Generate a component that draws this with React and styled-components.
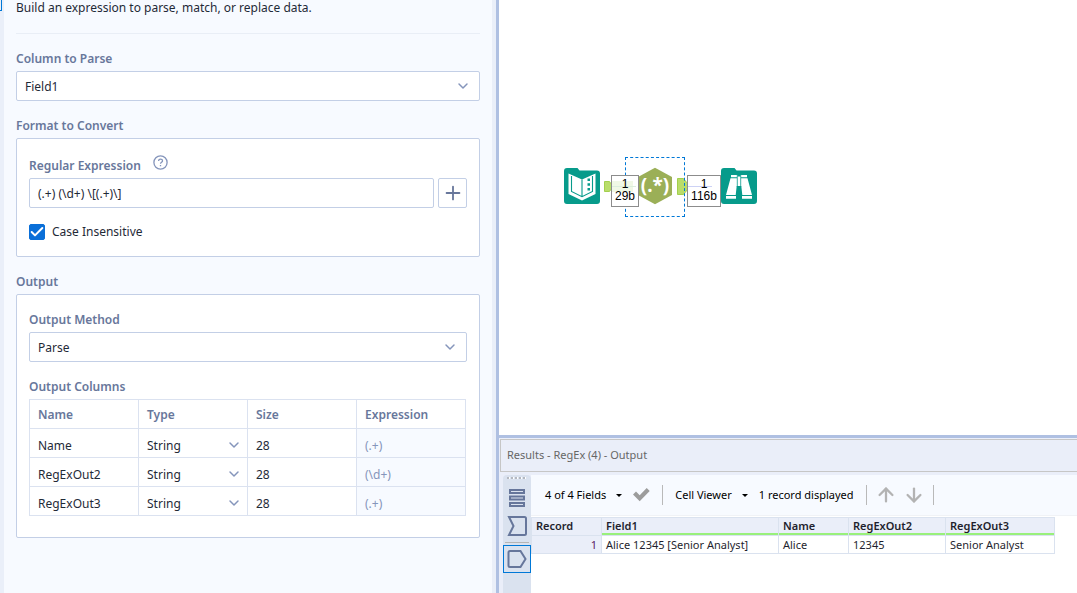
import React, { useState } from "react";
import styled, { createGlobalStyle } from "styled-components";
import { ArrowDown, ArrowUp, Check, ChevronDown, Plus } from "lucide-react";

const GlobalStyle = createGlobalStyle`
  * {
    box-sizing: border-box;
  }

  body {
    margin: 0;
    font-family: "Noto Sans", "Open Sans", sans-serif;
    font-size: 12px;
    color: #1f2a37;
  }

  button, input, select {
    font: inherit;
    color: inherit;
  }
`;

const Page = styled.div`
  display: grid;
  grid-template-columns: minmax(0, 248fr) 3px minmax(0, 289fr);
  min-height: 100vh;
  background: #fff;
`;

const Splitter = styled.div`
  background: #afc0e2;
  min-height: 3px;
`;

//configuration
const Gutter = styled.div`
  position: relative;
  display: flex;
  padding: 0 4px;
  background: #eaeff9;
`;

const FocusEdge = styled.div`
  position: absolute;
  left: 0;
  top: 0;
  width: 2px;
  height: 11px;
  border: solid #0078d7;
  border-width: 0 1px 1px 0;
`;

const Config = styled.section`
  flex: 1;
  min-width: 0;
  padding: 0 12px;
  background: #f7faff;
`;

const Intro = styled.p`
  margin: 0 0 16px;
  padding-bottom: 17px;
  line-height: 16px;
  border-bottom: 1px solid #e9eef6;
`;

const Field = styled.div`
  display: flex;
  flex-direction: column;
  gap: 3px;
  margin-bottom: 16px;
`;

const Label = styled.label`
  font-weight: 600;
  line-height: 18px;
  color: #68779b;
`;

const Panel = styled.div`
  padding: 16px 12px;
  border: 1px solid #c3cfe6;
  border-radius: 2px;
  background: #fff;
`;

const LabelRow = styled.div`
  display: flex;
  align-items: flex-end;
  gap: 12px;
  height: 20px;
`;

const HelpButton = styled.button`
  align-self: flex-start;
  display: flex;
  padding: 0;
  border: 0;
  background: none;
`;

const SelectBox = styled.div`
  position: relative;
  color: #8595bb;

  svg {
    position: absolute;
    right: ${({ $bare }) => ($bare ? 5 : 9)}px;
    top: 50%;
    margin-top: ${({ $bare }) => ($bare ? -6 : -8)}px;
    pointer-events: none;
  }
`;

const Select = styled.select`
  display: block;
  width: 100%;
  height: ${({ $bare }) => ($bare ? 28 : 30)}px;
  padding: ${({ $bare }) => ($bare ? 4 : 0)}px 24px 0 8px;
  border: ${({ $bare }) => ($bare ? "0" : "1px solid #c3cfe6")};
  border-radius: 2px;
  background: #fff;
  color: #1f2a37;
  appearance: none;
`;

const InputRow = styled.div`
  display: flex;
  gap: 4px;
`;

const TextInput = styled.input`
  flex: 1;
  min-width: 0;
  height: 30px;
  padding: 0 8px;
  border: 1px solid #c3cfe6;
  border-radius: 2px;
  background: #fff;
`;

const AddButton = styled.button`
  display: flex;
  align-items: center;
  justify-content: center;
  width: 29px;
  padding: 0;
  border: 1px solid #c3cfe6;
  border-radius: 2px;
  background: #fff;
  color: #68779b;
`;

const CheckRow = styled.label`
  display: flex;
  align-items: center;
  gap: 7px;
  line-height: 16px;
`;

const CheckBox = styled.span`
  position: relative;
  display: flex;

  input {
    width: 16px;
    height: 16px;
    margin: 0;
    border: 1px solid #0a6fd8;
    border-radius: 2px;
    background: #fff;
    appearance: none;
  }

  input:checked {
    background: #0a6fd8;
  }

  svg {
    position: absolute;
    inset: 0;
    color: #fff;
    pointer-events: none;
  }
`;

const ColumnsTable = styled.table`
  width: calc(100% - 1px);
  margin: 3px 0 5px;
  table-layout: fixed;
  border-collapse: collapse;

  th, td {
    height: 29px;
    padding: 0;
    border: 1px solid #dbe2f0;
    text-align: left;
  }

  th {
    padding: 0 8px;
    color: #68779b;
    font-weight: 600;
  }
`;

const CellInput = styled.input`
  display: block;
  width: 100%;
  height: 28px;
  padding: 4px 8px 0;
  border: 0;
  background: transparent;
`;

const Expression = styled.td`
  && {
    padding: 4px 8px 0;
  }
  background: #f7faff;
  color: #8595bb;
`;

//workflow
const Main = styled.div`
  display: flex;
  flex-direction: column;
  min-width: 0;
`;

const Canvas = styled.section`
  position: relative;
  flex: 1;
  background: #fff;
`;

const Item = styled.svg`
  position: absolute;
  left: ${({ $x }) => $x}px;
  top: ${({ $y }) => $y}px;
`;

const Selection = styled.div`
  position: absolute;
  left: 126px;
  top: 157px;
  width: 60px;
  height: 60px;
  border: 1px dashed #0078d7;
`;

const Count = styled.div`
  position: absolute;
  left: ${({ $x }) => $x}px;
  top: 175px;
  width: ${({ $w }) => $w}px;
  height: 32px;
  padding-top: 2px;
  border: 1px solid #8c8c8c;
  background: ${({ $line, $tint }) => `
    linear-gradient(${$line}, ${$line}) 0 10px / 24px 1px no-repeat,
    linear-gradient(${$tint}, ${$tint}) 0 5px / 21px 11px no-repeat,
    #fff`};
  font-family: "Liberation Sans", sans-serif;
  line-height: 12px;
  text-align: center;
  color: #000;
`;

//results
const Results = styled.section`
  display: flex;
  flex-direction: column;
  min-height: 155px;
  padding: 1px 0 0 1px;
  background: #eaeef9;
`;

const ResultsTitle = styled.div`
  height: 33px;
  padding-left: 6px;
  border: 1px solid #c6c6c6;
  border-right: 0;
  font-size: 11px;
  line-height: 30px;
  color: #666;
`;

const ResultsBody = styled.div`
  display: flex;
  flex: 1;
  padding: 3px 0 0 3px;
`;

const Sidebar = styled.div`
  display: flex;
  flex-direction: column;
  width: 28px;
  border-radius: 4px 4px 0 0;
  background: #dae2ef;
`;

const Grip = styled.div`
  height: 2px;
  margin: 2px 5px 5px 4px;
  background: repeating-linear-gradient(90deg, #b4b8c0 0 2px, #fff 2px 3px, transparent 3px 4px);
`;

const SideButton = styled.button`
  display: flex;
  align-items: center;
  justify-content: center;
  height: 28px;
  padding: 0;
  border: ${({ $active }) => ($active ? "1px solid #0078d7" : "0")};
  background: none;
`;

const SideRule = styled.hr`
  width: 24px;
  margin: 2px auto;
  border: 0;
  border-top: 1px solid #b5b5b5;
`;

const ResultsView = styled.div`
  flex: 1;
  min-width: 0;
  background: #fff;
`;

const Toolbar = styled.div`
  display: flex;
  align-items: center;
  height: 41px;
  padding-left: 14px;
  border-bottom: 1px solid #f0f2f6;
  background: #f7faff;
  font-size: 11px;
  line-height: 16px;
  color: #000;
`;

const MenuButton = styled.button`
  display: flex;
  align-items: center;
  gap: 10px;
  margin-right: 11px;
  padding: 0;
  border: 0;
  background: none;
`;

const IconButton = styled.button`
  display: flex;
  padding: 0;
  border: 0;
  background: none;
  color: ${({ $color }) => $color};
`;

const Arrows = styled.div`
  display: flex;
  gap: 6px;
  margin: 0 -4px;
`;

const Caret = styled.span`
  border: 3px solid transparent;
  border-top-color: #000;
  border-bottom: 0;
`;

const Rule = styled.span`
  width: 1px;
  height: 20px;
  margin: 0 12px;
  background: #b9b9b9;
`;

const DataTable = styled.table`
  table-layout: fixed;
  width: 523px;
  margin-top: 1px;
  border-collapse: collapse;
  font-size: 11px;
  color: #1f1f2e;

  th, td {
    height: 18px;
    padding: 0 4px;
    border: 1px solid #dae2ef;
    line-height: 16px;
    text-align: left;
    white-space: nowrap;
  }

  th {
    padding-bottom: 2px;
    background: linear-gradient(#99f07b, #99f07b) 0 100% / 100% 2px no-repeat #eaeef9;
    font-weight: 600;
    line-height: 15px;
  }

  th:first-child {
    background: #eaeef9;
  }

  td:first-child {
    background: #eaeef9;
    color: #5c1a66;
    text-align: right;
  }
`;

const Col = styled.col`
  width: ${({ $w }) => $w}px;
`;

const outputColumns = [
  { name: "Name", expression: "(.+)" },
  { name: "RegExOut2", expression: "(\\d+)" },
  { name: "RegExOut3", expression: "(.+)" },
];

const resultColumns = [
  { label: "Record", value: "1", width: 70 },
  { label: "Field1", value: "Alice 12345 [Senior Analyst]", width: 177 },
  { label: "Name", value: "Alice", width: 70 },
  { label: "RegExOut2", value: "12345", width: 97 },
  { label: "RegExOut3", value: "Senior Analyst", width: 109 },
];

const Dropdown = ({ bare, value, ...rest }) => (
  <SelectBox $bare={bare}>
    <Select $bare={bare} defaultValue={value} {...rest}>
      <option>{value}</option>
    </Select>
    <ChevronDown size={16} strokeWidth={2.2} />
  </SelectBox>
);

const Configuration = () => {
  const [regex, setRegex] = useState("(.+) (\\d+) \\[(.+)\\]");
  const [insensitive, setInsensitive] = useState(true);

  return (
    <Gutter>
      <FocusEdge />
      <Config>
        <Intro>Build an expression to parse, match, or replace data.</Intro>
        <Field>
          <Label htmlFor="column">Column to Parse</Label>
          <Dropdown id="column" value="Field1" />
        </Field>
        <Field>
          <Label as="div">Format to Convert</Label>
          <Panel>
            <Field>
              <LabelRow>
                <Label htmlFor="regex">Regular Expression</Label>
                <HelpButton aria-label="Help">
                  <svg width="15" height="15" viewBox="0 0 15 15" fill="none" stroke="#8595bb" strokeWidth="1.3">
                    <circle cx="7.5" cy="7.5" r="6.6" />
                    <path d="M5.6 6.1c0-2.6 3.9-2.5 3.9-.2 0 1.4-2 1.3-2 2.9M7.5 9.9v1.3" />
                  </svg>
                </HelpButton>
              </LabelRow>
              <InputRow>
                <TextInput id="regex" value={regex} onChange={(e) => setRegex(e.target.value)} />
                <AddButton aria-label="Add">
                  <Plus size={22} strokeWidth={2} />
                </AddButton>
              </InputRow>
            </Field>
            <CheckRow>
              <CheckBox>
                <input
                  type="checkbox"
                  checked={insensitive}
                  onChange={(e) => setInsensitive(e.target.checked)}
                />
                {insensitive && <Check size={16} strokeWidth={3} />}
              </CheckBox>
              Case Insensitive
            </CheckRow>
          </Panel>
        </Field>
        <Field>
          <Label as="div">Output</Label>
          <Panel>
            <Field>
              <Label htmlFor="method">Output Method</Label>
              <Dropdown id="method" value="Parse" />
            </Field>
            <Label as="div">Output Columns</Label>
            <ColumnsTable>
              <thead>
                <tr>
                  <th>Name</th>
                  <th>Type</th>
                  <th>Size</th>
                  <th>Expression</th>
                </tr>
              </thead>
              <tbody>
                {outputColumns.map((column) => (
                  <tr key={column.name}>
                    <td>
                      <CellInput aria-label="Name" defaultValue={column.name} />
                    </td>
                    <td>
                      <Dropdown bare aria-label="Type" value="String" />
                    </td>
                    <td>
                      <CellInput aria-label="Size" defaultValue="28" />
                    </td>
                    <Expression>{column.expression}</Expression>
                  </tr>
                ))}
              </tbody>
            </ColumnsTable>
          </Panel>
        </Field>
      </Config>
    </Gutter>
  );
};

// tool tile with the raised tab on its top left
const tile = "M3 0h10.5l2 2.600H33q3 0 3 3V33q0 3-3 3H3q-3 0-3-3V3q0-3 3-3z";

const Workflow = () => (
  <Canvas>
    <Item $x={65} $y={168} width="37" height="37" viewBox="0 0 37 37">
      <path d={tile} fill="#079b8b" />
      <path d="M4.500 5.500L18 11.500 31.500 5.500V26L18 32.500 4.500 26z" fill="#fff" />
      <path d="M7.500 8v15.500L18 28.700l10.500-5.200V8M18 11.500v17" fill="none" stroke="#079b8b" strokeWidth="1.100" />
      <path d="M23.500 10.500H26V13h-2.500zM23.500 15.200H26v2.500h-2.500zM23.500 20H26v2.500h-2.500z" fill="#079b8b" />
    </Item>
    <Item $x={105} $y={181} width="8" height="11" viewBox="0 0 8 11">
      <path d="M.5.5h5l2 3v4l-2 3h-5z" fill="#b9dd6a" stroke="#a3cf4e" />
    </Item>
    <Item $x={138} $y={167} width="36" height="38" viewBox="0 0 36 38">
      <path d="M18 .7l17 9.300v18L18 37.300 1 28V10z" fill="#9baf57" />
      <text x="18" y="25" textAnchor="middle" fill="#fff" fontFamily="Noto Sans" fontWeight="700" fontSize="19">(.*)</text>
    </Item>
    <Item $x={178} $y={178} width="12" height="17" viewBox="0 0 12 17">
      <path d="M.5.5h6l4 5v6l-4 5h-6z" fill="#b9dd6a" stroke="#a3cf4e" />
    </Item>
    <Selection />
    <Count $x={112} $w={28} $line="#dceedd" $tint="#f0f8e6">1<br />29b</Count>
    <Count $x={188} $w={34} $line="#cdd2f5" $tint="#fff">1<br />116b</Count>
    <Item $x={222} $y={168} width="37" height="37" viewBox="0 0 37 37">
      <path d={tile} fill="#079b8b" />
      <path
        d="M10 7h6.500v2.300H10zM19.500 7H26v2.300h-6.500zM9.500 10.300H16V8.500h4v1.800h6.500L31 27h-9.700l-1-9h-4.600l-1 9H5zM5 28h10v2.700H5zM21 28h10v2.700H21z"
        fill="#fff"
      />
      <path d="M16.300 7v12M19.700 7v12" stroke="#079b8b" strokeWidth=".8" />
    </Item>
  </Canvas>
);

const SideIcon = ({ d }) => (
  <svg width="20" height="20" viewBox="0 0 20 20" fill="none" stroke="#66769b" strokeWidth="2">
    <path d={d} />
  </svg>
);

const ResultsPane = () => (
  <Results>
    <ResultsTitle>Results - RegEx (4) - Output</ResultsTitle>
    <ResultsBody>
      <Sidebar>
        <Grip />
        <SideButton aria-label="Messages">
          <SideIcon d="M3 2h14v3H3zM3 8.500h14v3H3zM3 15h14v3H3z" />
        </SideButton>
        <SideButton aria-label="Input">
          <SideIcon d="M2 1h15.500q1.500 0 1.500 1.500v15q0 1.500-1.500 1.500H2L6.500 10z" />
        </SideButton>
        <SideRule />
        <SideButton aria-label="Output" $active>
          <SideIcon d="M3 2h10.500l5 8-5 8H3q-1.500 0-1.500-1.500v-13Q1.500 2 3 2z" />
        </SideButton>
      </Sidebar>
      <ResultsView>
        <Toolbar>
          <MenuButton>4 of 4 Fields<Caret /></MenuButton>
          <IconButton $color="#9c9c9c" aria-label="Apply">
            <svg width="17" height="14" viewBox="0 0 17 14">
              <path d="M0 6.500l3-3 3.700 3.700L13.700 0l3 3L6.700 13.200z" fill="currentColor" />
            </svg>
          </IconButton>
          <Rule />
          <MenuButton>Cell Viewer<Caret /></MenuButton>
          <span>1 record displayed</span>
          <Rule />
          <Arrows>
            <IconButton $color="#b3b3b3" aria-label="Previous">
              <ArrowUp size={22} strokeWidth={2.5} />
            </IconButton>
            <IconButton $color="#b3b3b3" aria-label="Next">
              <ArrowDown size={22} strokeWidth={2.5} />
            </IconButton>
          </Arrows>
          <Rule />
        </Toolbar>
        <DataTable>
          <colgroup>
            {resultColumns.map((column) => (
              <Col key={column.label} $w={column.width} />
            ))}
          </colgroup>
          <thead>
            <tr>
              {resultColumns.map((column) => (
                <th key={column.label}>{column.label}</th>
              ))}
            </tr>
          </thead>
          <tbody>
            <tr>
              {resultColumns.map((column) => (
                <td key={column.label}>{column.value}</td>
              ))}
            </tr>
          </tbody>
        </DataTable>
      </ResultsView>
    </ResultsBody>
  </Results>
);

const App = () => (
  <>
    <GlobalStyle />
    <Page>
      <Configuration />
      <Splitter />
      <Main>
        <Workflow />
        <Splitter />
        <ResultsPane />
      </Main>
    </Page>
  </>
);

export default App;
